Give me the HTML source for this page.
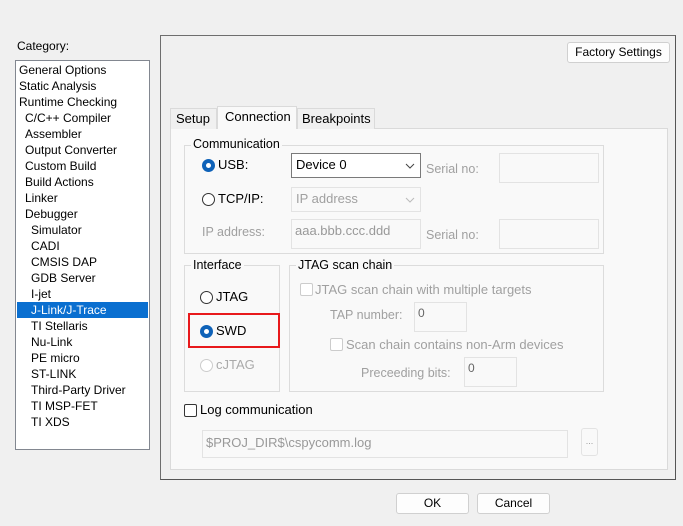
<!DOCTYPE html>
<html><head><style>
*{box-sizing:border-box;margin:0;padding:0}
body{width:683px;height:526px;background:#f0f0f0;font-family:"Liberation Sans","Noto Sans CJK SC",sans-serif;font-size:12px;color:#000;position:relative;overflow:hidden}
.a{position:absolute}
.t{position:absolute;white-space:nowrap;line-height:16px}
.g{color:#a0a0a0}
.box{position:absolute;border:1px solid #e3e3e3;background:#f9f9f9}
.grp{position:absolute;border:1px solid #dcdcdc}
.lg{position:absolute;background:#f9f9f9;padding:0 2px;line-height:14px;font-size:12.5px}
.btn{position:absolute;border:1px solid #d0d0d0;border-radius:3px;background:#fdfdfd;text-align:center;font-size:12px}
.rad{position:absolute;width:13px;height:13px;border-radius:50%;border:1px solid #333;background:#fff}
.rad.on{background:#0f62b8;border-color:#0f62b8}
.rad.on::after{content:"";position:absolute;left:3px;top:3px;width:5px;height:5px;border-radius:50%;background:#fff}
.chk{position:absolute;width:13px;height:13px;border:1px solid #333;border-radius:2px;background:#fff}
.li{position:absolute;left:3px;height:16px;line-height:16px;white-space:nowrap}
.chev{position:absolute;right:5px;top:9px}
</style></head><body>
<div class="t" style="left:17px;top:38px">Category:</div>
<div class="a" style="left:15px;top:60px;width:135px;height:390px;border:1px solid #828790;background:#fff">
<div class="li" style="top:1px">General Options</div>
<div class="li" style="top:17px">Static Analysis</div>
<div class="li" style="top:33px">Runtime Checking</div>
<div class="li" style="top:49px;left:9px">C/C++ Compiler</div>
<div class="li" style="top:65px;left:9px">Assembler</div>
<div class="li" style="top:81px;left:9px">Output Converter</div>
<div class="li" style="top:97px;left:9px">Custom Build</div>
<div class="li" style="top:113px;left:9px">Build Actions</div>
<div class="li" style="top:129px;left:9px">Linker</div>
<div class="li" style="top:145px;left:9px">Debugger</div>
<div class="li" style="top:161px;left:15px">Simulator</div>
<div class="li" style="top:177px;left:15px">CADI</div>
<div class="li" style="top:193px;left:15px">CMSIS DAP</div>
<div class="li" style="top:209px;left:15px">GDB Server</div>
<div class="li" style="top:225px;left:15px">I-jet</div>
<div class="li" style="top:241px;left:1px;width:131px;padding-left:14px;background:#0a6fd0;color:#fff">J-Link/J-Trace</div>
<div class="li" style="top:257px;left:15px">TI Stellaris</div>
<div class="li" style="top:273px;left:15px">Nu-Link</div>
<div class="li" style="top:289px;left:15px">PE micro</div>
<div class="li" style="top:305px;left:15px">ST-LINK</div>
<div class="li" style="top:321px;left:15px">Third-Party Driver</div>
<div class="li" style="top:337px;left:15px">TI MSP-FET</div>
<div class="li" style="top:353px;left:15px">TI XDS</div>
</div>

<div class="a" style="left:160px;top:35px;width:516px;height:445px;border:1px solid #6e6e6e;border-right-color:#555;border-bottom-color:#555"></div>
<div class="btn" style="left:567px;top:42px;width:103px;height:21px;line-height:19px">Factory Settings</div>

<div class="a" style="left:170px;top:128px;width:498px;height:342px;border:1px solid #dadada;background:#f9f9f9"></div>
<div class="a" style="left:170px;top:108px;width:47px;height:21px;border:1px solid #dadada;border-bottom:none;background:#f0f0f0;font-size:13px;line-height:20px;padding-left:5px">Setup</div>
<div class="a" style="left:217px;top:106px;width:80px;height:23px;border:1px solid #dadada;border-bottom:none;background:#f9f9f9;font-size:13px;line-height:20px;padding-left:7px">Connection</div>
<div class="a" style="left:297px;top:108px;width:78px;height:21px;border:1px solid #dadada;border-bottom:none;background:#f0f0f0;font-size:13px;line-height:20px;padding-left:4px">Breakpoints</div>

<div class="grp" style="left:184px;top:145px;width:420px;height:109px"></div>
<div class="lg" style="left:191px;top:137px">Communication</div>
<div class="rad on" style="left:202px;top:159px"></div>
<div class="t" style="left:218px;top:157px;font-size:13px">USB:</div>
<div class="a" style="left:291px;top:153px;width:130px;height:25px;border:1px solid #7a7a7a;background:#fff;font-size:13px;line-height:22px;padding-left:4px">Device 0<svg class="chev" width="10" height="6" viewBox="0 0 10 6"><path d="M1 1L5 5L9 1" fill="none" stroke="#444" stroke-width="1"/></svg></div>
<div class="t g" style="left:426px;top:161px;font-size:12.5px">Serial no:</div>
<div class="box" style="left:499px;top:153px;width:100px;height:30px"></div>
<div class="rad" style="left:202px;top:193px"></div>
<div class="t" style="left:218px;top:191px;font-size:13px">TCP/IP:</div>
<div class="box" style="left:291px;top:187px;width:130px;height:25px;color:#a0a0a0;font-size:13px;line-height:22px;padding-left:4px">IP address<svg class="chev" width="10" height="6" viewBox="0 0 10 6"><path d="M1 1L5 5L9 1" fill="none" stroke="#bbb" stroke-width="1"/></svg></div>
<div class="t g" style="left:202px;top:224px;font-size:12.5px">IP address:</div>
<div class="box" style="left:291px;top:219px;width:130px;height:30px;color:#999;font-size:13px;line-height:22px;padding-left:3px">aaa.bbb.ccc.ddd</div>
<div class="t g" style="left:426px;top:227px;font-size:12.5px">Serial no:</div>
<div class="box" style="left:499px;top:219px;width:100px;height:30px"></div>

<div class="grp" style="left:184px;top:265px;width:96px;height:127px"></div>
<div class="lg" style="left:191px;top:258px">Interface</div>
<div class="rad" style="left:200px;top:291px"></div>
<div class="t" style="left:216px;top:289px;font-size:13px">JTAG</div>
<div class="a" style="left:188px;top:313px;width:92px;height:35px;border:2px solid #e8191c"></div>
<div class="rad on" style="left:200px;top:325px"></div>
<div class="t" style="left:216px;top:323px;font-size:13px">SWD</div>
<div class="rad" style="left:200px;top:359px;border-color:#ccc"></div>
<div class="t g" style="left:216px;top:357px;font-size:13px;color:#aaa">cJTAG</div>

<div class="grp" style="left:289px;top:265px;width:315px;height:127px"></div>
<div class="lg" style="left:296px;top:258px">JTAG scan chain</div>
<div class="chk" style="left:300px;top:283px;border-color:#ccc"></div>
<div class="t g" style="left:315px;top:282px;font-size:13px">JTAG scan chain with multiple targets</div>
<div class="t g" style="left:330px;top:307px;font-size:12.5px">TAP number:</div>
<div class="box" style="left:414px;top:302px;width:53px;height:30px;color:#666;line-height:20px;padding-left:3px">0</div>
<div class="chk" style="left:330px;top:338px;border-color:#ccc"></div>
<div class="t g" style="left:346px;top:337px;font-size:13px">Scan chain contains non-Arm devices</div>
<div class="t g" style="left:361px;top:365px;font-size:12.5px">Preceeding bits:</div>
<div class="box" style="left:464px;top:357px;width:53px;height:30px;color:#666;line-height:20px;padding-left:3px">0</div>

<div class="chk" style="left:184px;top:404px"></div>
<div class="t" style="left:200px;top:402px;font-size:13px">Log communication</div>
<div class="box" style="left:202px;top:430px;width:366px;height:28px;color:#999;font-size:13px;line-height:24px;padding-left:3px">$PROJ_DIR$\cspycomm.log</div>
<div class="box" style="left:581px;top:428px;width:17px;height:28px;border-radius:3px;color:#999;font-size:9px;text-align:center;line-height:24px">...</div>

<div class="btn" style="left:396px;top:493px;width:73px;height:21px;line-height:19px">OK</div>
<div class="btn" style="left:477px;top:493px;width:73px;height:21px;line-height:19px">Cancel</div>
</body></html>
